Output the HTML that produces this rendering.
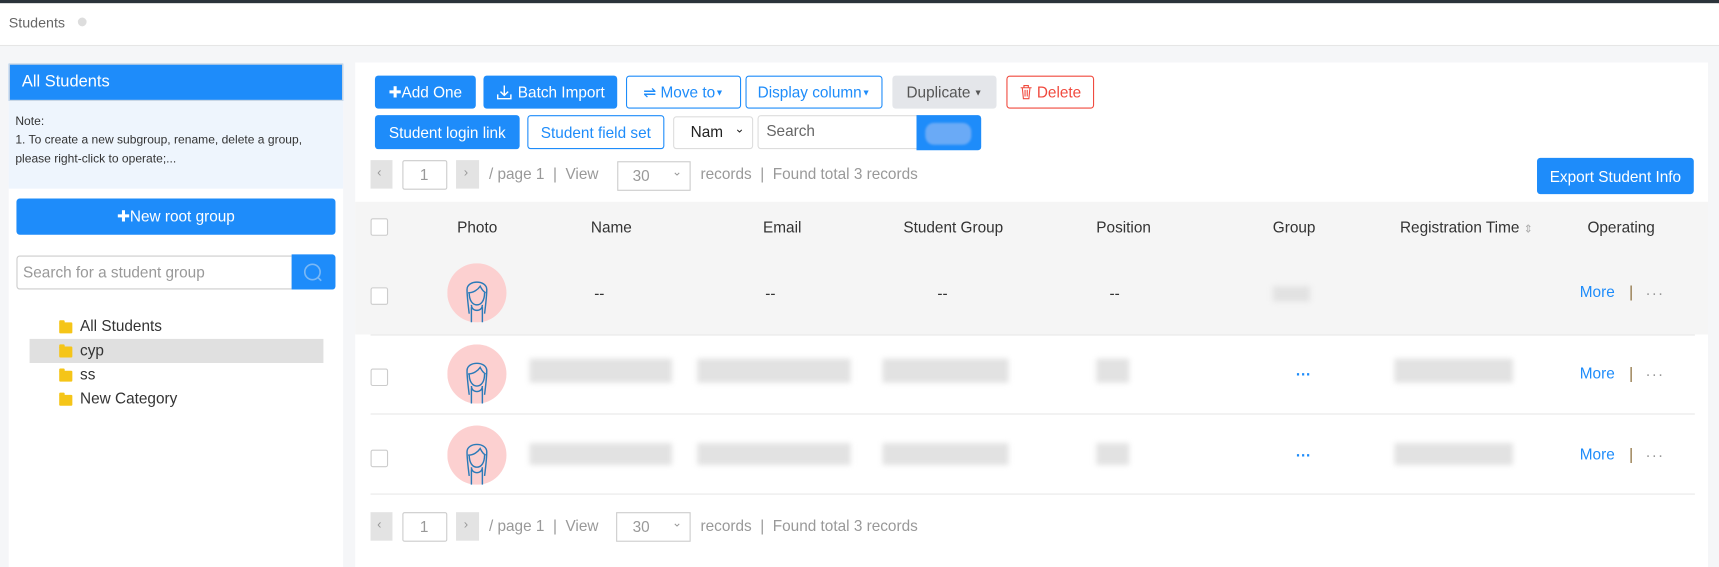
<!DOCTYPE html>
<html><head><meta charset="utf-8"><style>
html,body{margin:0;padding:0;width:1719px;height:567px;overflow:hidden;background:#f5f6f8;font-family:"Liberation Sans",sans-serif;}
#w{position:absolute;left:0;top:0;width:1568px;height:517px;transform:scale(1.09630,1.09671);transform-origin:0 0;background:#f5f6f8;}
.a{position:absolute;box-sizing:border-box;}
.btn{position:absolute;box-sizing:border-box;font-size:14px;display:flex;align-items:center;justify-content:center;border-radius:3px;white-space:nowrap;}
.pri{background:#1e8cfa;color:#fff;}
.out{background:#fff;border:1px solid #1e8cfa;color:#1e8cfa;}
.t{position:absolute;font-size:14px;color:#333;white-space:nowrap;}
.g{color:#999;}
.blur{position:absolute;background:#e2e2e2;filter:blur(2.5px);}
.cb{position:absolute;width:16px;height:16px;border:1px solid #ccc;background:#fff;box-sizing:border-box;border-radius:2px;}
.fold{position:absolute;width:12px;height:10px;background:#f5c518;border-radius:1px;}
.fold:before{content:"";position:absolute;left:0;top:-2px;width:5px;height:3px;background:#f5c518;border-radius:1px 1px 0 0;}
.dots{position:absolute;font-size:14px;color:#999;letter-spacing:1px;}
</style></head><body><div id="w">
<div class="a" style="left:0;top:0;width:1568px;height:3px;background:#2b333b"></div>
<div class="a" style="left:0;top:3px;width:1568px;height:39px;background:#fff;border-bottom:1px solid #e6e6e6"></div>
<div class="t" style="left:8px;top:13px;color:#666;font-size:13px">Students</div>
<div class="a" style="left:71px;top:16px;width:8px;height:8px;border-radius:50%;background:#ddd"></div>

<div class="a" style="left:8px;top:58px;width:305px;height:459px;background:#fff"></div>
<div class="a" style="left:8px;top:58px;width:305px;height:34px;background:#1e8cfa;border:1px solid #d0d7e0"></div>
<div class="t" style="left:20px;top:66px;color:#fff;font-size:15px">All Students</div>
<div class="a" style="left:8px;top:92px;width:305px;height:80px;background:#eef5fd"></div>
<div class="t" style="left:14px;top:103px;font-size:11px;line-height:17px;color:#333">Note:<br>1. To create a new subgroup, rename, delete a group,<br>please right-click to operate;...</div>
<div class="btn pri" style="left:15px;top:181px;width:291px;height:33px;font-size:14px">✚New root group</div>
<div class="a" style="left:15px;top:233px;width:252px;height:31px;border:1px solid #ccc;border-radius:3px 0 0 3px;background:#fff"></div>
<div class="t" style="left:21px;top:240px;color:#999">Search for a student group</div>
<div class="a" style="left:266px;top:232px;width:40px;height:32px;background:#1e8cfa;border-radius:0 3px 3px 0"></div>
<svg class="a" style="left:276px;top:239px" width="20" height="20"><circle cx="9" cy="9" r="7" fill="none" stroke="#7ab8f5" stroke-width="1.5"/><line x1="14" y1="14" x2="17" y2="17" stroke="#7ab8f5" stroke-width="1.5"/></svg>
<div class="a" style="left:27px;top:309px;width:268px;height:22px;background:#e0e0e0"></div>
<div class="fold" style="left:54px;top:294px"></div><div class="t" style="left:73px;top:289px">All Students</div>
<div class="fold" style="left:54px;top:316px"></div><div class="t" style="left:73px;top:311px">cyp</div>
<div class="fold" style="left:54px;top:338px"></div><div class="t" style="left:73px;top:333px">ss</div>
<div class="fold" style="left:54px;top:360px"></div><div class="t" style="left:73px;top:355px">New Category</div>

<div class="a" style="left:324px;top:57px;width:1234px;height:460px;background:#fff"></div>
<div class="btn pri" style="left:342px;top:69px;width:92px;height:30px">✚Add One</div>
<div class="btn pri" style="left:441px;top:69px;width:122px;height:30px"><svg width="16" height="16" style="margin-right:4px"><path d="M8 2v9M4.5 7.5L8 11l3.5-3.5M2 10v4h12v-4" fill="none" stroke="#fff" stroke-width="1.3"/></svg>Batch Import</div>
<div class="btn out" style="left:571px;top:69px;width:105px;height:30px"><span style="margin-right:4px">⇌</span>Move to<span style="font-size:8px">▼</span></div>
<div class="btn out" style="left:680px;top:69px;width:125px;height:30px">Display column<span style="font-size:8px">▼</span></div>
<div class="btn" style="left:814px;top:69px;width:95px;height:30px;background:#e4e6ea;color:#555">Duplicate <span style="font-size:8px;margin-left:3px">▼</span></div>
<div class="btn" style="left:918px;top:69px;width:80px;height:30px;border:1px solid #f04a3e;color:#f04a3e;background:#fff"><svg width="12" height="14" style="margin-right:4px"><path d="M1 3h10M4 3V1h4v2M2.5 3l1 10h5l1-10M5 5v6M7 5v6" fill="none" stroke="#f04a3e" stroke-width="1"/></svg>Delete</div>

<div class="btn pri" style="left:342px;top:105px;width:132px;height:31px">Student login link</div>
<div class="btn out" style="left:481px;top:105px;width:125px;height:31px">Student field set</div>
<div class="a" style="left:614px;top:106px;width:73px;height:30px;border:1px solid #ddd;border-radius:3px"></div>
<div class="t" style="left:630px;top:112px;color:#222">Nam</div><div class="t" style="left:670px;top:111px;font-size:11px;color:#222">⌄</div>
<div class="a" style="left:691px;top:105px;width:150px;height:31px;border:1px solid #ddd;border-radius:3px"></div>
<div class="t" style="left:699px;top:111px;color:#666">Search</div>
<div class="a" style="left:836px;top:105px;width:59px;height:32px;background:#1e8cfa;border-radius:0 3px 3px 0"></div>
<div class="a" style="left:844px;top:112px;width:42px;height:20px;background:#6aaaf6;border-radius:8px;filter:blur(1px)"></div>

<div class="a" style="left:338px;top:146px;width:20px;height:26px;background:#e3e3e3"></div><div class="t g" style="left:344px;top:150px;font-size:12px">‹</div>
<div class="a" style="left:367px;top:146px;width:41px;height:27px;border:1px solid #ccc;border-radius:2px"></div><div class="t g" style="left:383px;top:151px">1</div>
<div class="a" style="left:416px;top:146px;width:21px;height:26px;background:#e3e3e3"></div><div class="t g" style="left:423px;top:150px;font-size:12px">›</div>
<div class="t g" style="left:446px;top:150px">/ page 1 &nbsp;| &nbsp;View</div>
<div class="a" style="left:563px;top:147px;width:67px;height:27px;border:1px solid #ccc"></div><div class="t g" style="left:577px;top:152px">30</div><div class="t g" style="left:613px;top:150px;font-size:11px">⌄</div>
<div class="t g" style="left:639px;top:150px">records &nbsp;| &nbsp;Found total 3 records</div>
<div class="btn pri" style="left:1402px;top:144px;width:143px;height:33px">Export Student Info</div>

<div class="a" style="left:324px;top:184px;width:1234px;height:121px;background:#f5f5f5"></div>
<div class="cb" style="left:338px;top:199px"></div>
<div class="t" style="left:417px;top:199px">Photo</div>
<div class="t" style="left:539px;top:199px">Name</div>
<div class="t" style="left:696px;top:199px">Email</div>
<div class="t" style="left:824px;top:199px">Student Group</div>
<div class="t" style="left:1000px;top:199px">Position</div>
<div class="t" style="left:1161px;top:199px">Group</div>
<div class="t" style="left:1277px;top:199px">Registration Time <span style="color:#aaa;font-size:10px">⇕</span></div>
<div class="t" style="left:1448px;top:199px">Operating</div>

<div class="a" style="left:338px;top:305px;width:1208px;height:1px;background:#e8e8e8"></div>
<div class="a" style="left:338px;top:377px;width:1208px;height:1px;background:#e8e8e8"></div>
<div class="a" style="left:338px;top:450px;width:1208px;height:1px;background:#e8e8e8"></div>

<div class="cb" style="left:338px;top:262px"></div>
<div class="cb" style="left:338px;top:336px"></div>
<div class="cb" style="left:338px;top:410px"></div>

<svg class="a" style="left:408px;top:240px" width="54" height="54"><circle cx="27" cy="27" r="27" fill="#fcd0d0"/><path d="M20 46c-1-8-2-16-2-22 0-9 18-9 18 0 0 6-1 14-2 22M19 27c5 0 9-3 11-6 1 2 3 5 5 6M20 27c0 7 3 11 7 11s7-4 7-11M22 38c0 3 2 5 5 5s5-2 5-5M22 40v14M32 40v14" fill="none" stroke="#2a7ab8" stroke-width="1.3"/></svg>
<svg class="a" style="left:408px;top:314px" width="54" height="54"><circle cx="27" cy="27" r="27" fill="#fcd0d0"/><path d="M20 46c-1-8-2-16-2-22 0-9 18-9 18 0 0 6-1 14-2 22M19 27c5 0 9-3 11-6 1 2 3 5 5 6M20 27c0 7 3 11 7 11s7-4 7-11M22 38c0 3 2 5 5 5s5-2 5-5M22 40v14M32 40v14" fill="none" stroke="#2a7ab8" stroke-width="1.3"/></svg>
<svg class="a" style="left:408px;top:388px" width="54" height="54"><circle cx="27" cy="27" r="27" fill="#fcd0d0"/><path d="M20 46c-1-8-2-16-2-22 0-9 18-9 18 0 0 6-1 14-2 22M19 27c5 0 9-3 11-6 1 2 3 5 5 6M20 27c0 7 3 11 7 11s7-4 7-11M22 38c0 3 2 5 5 5s5-2 5-5M22 40v14M32 40v14" fill="none" stroke="#2a7ab8" stroke-width="1.3"/></svg>

<div class="t" style="left:542px;top:259px">--</div>
<div class="t" style="left:698px;top:259px">--</div>
<div class="t" style="left:855px;top:259px">--</div>
<div class="t" style="left:1012px;top:259px">--</div>
<div class="blur" style="left:1161px;top:261px;width:34px;height:14px"></div>

<div class="blur" style="left:483px;top:327px;width:130px;height:22px"></div>
<div class="blur" style="left:636px;top:327px;width:140px;height:22px"></div>
<div class="blur" style="left:805px;top:327px;width:115px;height:22px"></div>
<div class="blur" style="left:1000px;top:327px;width:30px;height:22px"></div>
<div class="blur" style="left:1272px;top:327px;width:108px;height:22px"></div>
<div class="blur" style="left:483px;top:404px;width:130px;height:20px"></div>
<div class="blur" style="left:636px;top:404px;width:140px;height:20px"></div>
<div class="blur" style="left:805px;top:404px;width:115px;height:20px"></div>
<div class="blur" style="left:1000px;top:404px;width:30px;height:20px"></div>
<div class="blur" style="left:1272px;top:404px;width:108px;height:20px"></div>
<div class="t" style="left:1182px;top:333px;color:#1e8cfa;font-weight:bold">···</div>
<div class="t" style="left:1182px;top:407px;color:#1e8cfa;font-weight:bold">···</div>

<div class="t" style="left:1441px;top:258px;color:#1e8cfa">More</div><div class="t" style="left:1486px;top:258px;color:#8a6d3b">|</div><div class="dots" style="left:1501px;top:259px">···</div>
<div class="t" style="left:1441px;top:332px;color:#1e8cfa">More</div><div class="t" style="left:1486px;top:332px;color:#8a6d3b">|</div><div class="dots" style="left:1501px;top:333px">···</div>
<div class="t" style="left:1441px;top:406px;color:#1e8cfa">More</div><div class="t" style="left:1486px;top:406px;color:#8a6d3b">|</div><div class="dots" style="left:1501px;top:407px">···</div>

<div class="a" style="left:338px;top:467px;width:20px;height:26px;background:#e3e3e3"></div><div class="t g" style="left:344px;top:471px;font-size:12px">‹</div>
<div class="a" style="left:367px;top:467px;width:41px;height:27px;border:1px solid #ccc;border-radius:2px"></div><div class="t g" style="left:383px;top:472px">1</div>
<div class="a" style="left:416px;top:467px;width:21px;height:26px;background:#e3e3e3"></div><div class="t g" style="left:423px;top:471px;font-size:12px">›</div>
<div class="t g" style="left:446px;top:471px">/ page 1 &nbsp;| &nbsp;View</div>
<div class="a" style="left:562px;top:467px;width:68px;height:27px;border:1px solid #ccc"></div><div class="t g" style="left:577px;top:472px">30</div><div class="t g" style="left:613px;top:470px;font-size:11px">⌄</div>
<div class="t g" style="left:639px;top:471px">records &nbsp;| &nbsp;Found total 3 records</div>
</div></body></html>
